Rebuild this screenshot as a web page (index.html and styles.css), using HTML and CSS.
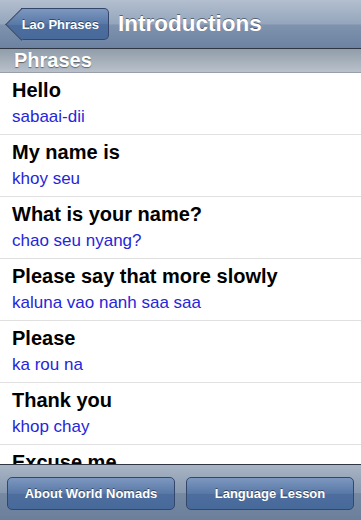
FILE: index.html
```html
<!DOCTYPE html>
<html>
<head>
<meta charset="utf-8">
<link rel="stylesheet" href="styles.css">
</head>
<body>
<div class="screen">
  <header class="navbar">
    <button class="back">Lao Phrases</button>
    <h1 class="title">Introductions</h1>
  </header>
  <div class="section">Phrases</div>
  <ul class="list">
    <li class="row"><div class="en">Hello</div><div class="lao">sabaai-dii</div></li>
    <li class="row"><div class="en">My name is</div><div class="lao">khoy seu</div></li>
    <li class="row"><div class="en">What is your name?</div><div class="lao">chao seu nyang?</div></li>
    <li class="row"><div class="en">Please say that more slowly</div><div class="lao">kaluna vao nanh saa saa</div></li>
    <li class="row"><div class="en">Please</div><div class="lao">ka rou na</div></li>
    <li class="row"><div class="en">Thank you</div><div class="lao">khop chay</div></li>
    <li class="row"><div class="en">Excuse me</div></li>
  </ul>
  <footer class="toolbar">
    <button class="tbtn">About World Nomads</button>
    <button class="tbtn">Language Lesson</button>
  </footer>
</div>
</body>
</html>
```
FILE: styles.css
```css
html, body {
  margin: 0;
  padding: 0;
}
body {
  font-family: "Liberation Sans", Arial, sans-serif;
  background: #fff;
}
.screen {
  width: 361px;
  height: 520px;
  display: flex;
  flex-direction: column;
  overflow: hidden;
}
.navbar {
  height: 48px;
  flex: 0 0 48px;
  border-bottom: 1px solid #2d3642;
  background: linear-gradient(#b3bfcf, #94a5bc 50%, #7f93ae 52%, #6c82a1);
  display: flex;
  align-items: center;
  padding-left: 5px;
  box-sizing: content-box;
}
.back {
  position: relative;
  margin-left: 16px;
  height: 32px;
  width: 88px;
  border: 1px solid #34476a;
  border-left: none;
  border-radius: 0 5px 5px 0;
  background: linear-gradient(#7d98c0, #5878a6 50%, #4c6d9d 52%, #486a9b);
  color: #fff;
  font: bold 13px "Liberation Sans", Arial, sans-serif;
  text-shadow: 0 -1px 0 rgba(0,0,0,0.45);
  box-sizing: border-box;
  text-align: right;
  padding: 0 9px 0 0;
  z-index: 0;
}
.back::before {
  content: "";
  position: absolute;
  left: -11px;
  top: 3.7px;
  width: 22px;
  height: 22px;
  border-left: 1px solid #34476a;
  border-bottom: 1px solid #34476a;
  background: linear-gradient(to bottom right, #7d98c0, #5878a6 50%, #4c6d9d 52%, #486a9b);
  transform: rotate(45deg);
  z-index: -1;
}
.title {
  margin: 0 0 0 9px;
  color: #fff;
  font-size: 22.5px;
  font-weight: bold;
  text-shadow: 0 -1px 0 rgba(0,0,0,0.45);
}
.section {
  flex: 0 0 24px;
  height: 24px;
  box-sizing: border-box;
  border-bottom: 1px solid #989fa8;
  background: linear-gradient(#919dab, #b9c1ca);
  color: #fff;
  font-size: 20px;
  font-weight: bold;
  line-height: 23px;
  padding-left: 14px;
  text-shadow: 0 1px 1px rgba(0,0,0,0.45);
}
.list {
  flex: 1 1 auto;
  margin: 0;
  padding: 0;
  list-style: none;
  overflow: hidden;
}
.row {
  height: 62px;
  box-sizing: border-box;
  border-bottom: 1px solid #e0e0e0;
  padding: 5px 12px 0;
}
.en {
  font-size: 20px;
  font-weight: bold;
  line-height: 24px;
  color: #000;
}
.lao {
  margin-top: 5px;
  font-size: 17px;
  line-height: 20px;
  color: #2626d9;
}
.toolbar {
  flex: 0 0 56px;
  height: 56px;
  box-sizing: border-box;
  border-top: 1px solid #2d3642;
  background: linear-gradient(#a9b5c5, #8798af 50%, #7689a3 52%, #6b7f9b);
  display: flex;
  gap: 11px;
  padding: 12px 7px 0;
}
.tbtn {
  flex: 1 1 0;
  height: 33px;
  border: 1px solid #34476a;
  border-radius: 5px;
  background: linear-gradient(#7d98c0, #5878a6 50%, #4c6d9d 52%, #486a9b);
  color: #fff;
  font: bold 13px "Liberation Sans", Arial, sans-serif;
  text-shadow: 0 -1px 0 rgba(0,0,0,0.45);
  padding: 0;
}
```
